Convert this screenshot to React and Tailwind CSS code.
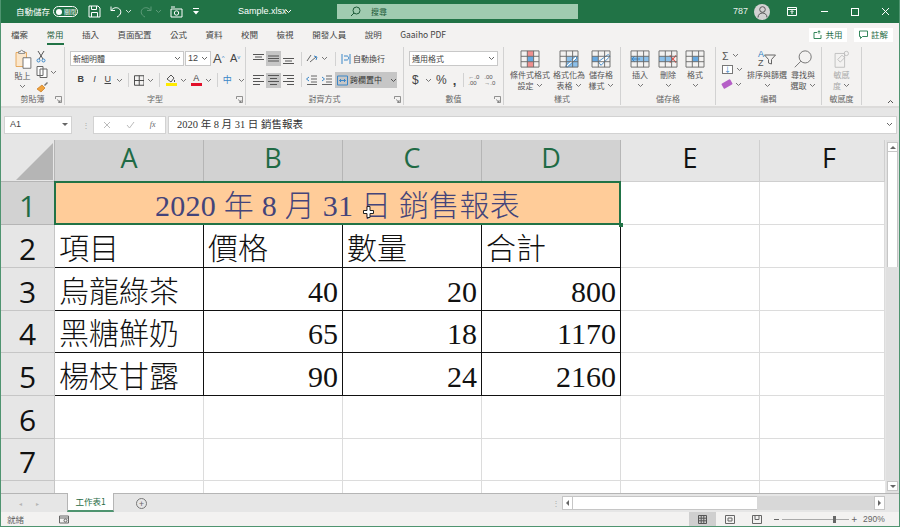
import React from "react";

const ui = "font-['Noto_Sans_CJK_TC','Liberation_Sans',sans-serif]";
const cellFont = "font-['Liberation_Serif','Noto_Sans_CJK_TC',serif]";

const Chev = ({ className = "" }) => (
  <svg width="7" height="5" viewBox="0 0 7 5" className={"shrink-0 " + className}>
    <path d="M1 1l2.500 2.500L6 1" fill="none" stroke="currentColor" strokeWidth="1" />
  </svg>
);

const Launcher = () => (
  <svg width="7" height="7" viewBox="0 0 7 7" className="absolute right-[2px] top-[3px] text-[#777]">
    <path d="M.5 3V.5H6.500V6.500H3.500M2 3.500L5 6M5 4v2H3" fill="none" stroke="currentColor" strokeWidth=".8" />
  </svg>
);

const Group = ({ label, width, launcher, children }) => (
  <div className={"flex h-full flex-col shrink-0 border-r border-[#d2d2d2] " + width}>
    <div className="flex-1 min-h-0">{children}</div>
    <div className="relative h-[12px] text-center text-[8px] leading-[12px] text-[#666]">
      {label}
      {launcher && <Launcher />}
    </div>
  </div>
);

const Lines = ({ kind, active }) => {
  const rows = {
    top: ["M1 1.500h11", "M3 4h7", "M1 6.500h11"],
    mid: ["M1 3h11", "M1 5.500h11", "M1 8h11"],
    bot: ["M1 5.500h11", "M3 8h7", "M1 10.500h11"],
    left: ["M1 1.500h11", "M1 4.500h7", "M1 7.500h11", "M1 10.500h7"],
    center: ["M1 1.500h11", "M3 4.500h7", "M1 7.500h11", "M3 10.500h7"],
    right: ["M1 1.500h11", "M5 4.500h7", "M1 7.500h11", "M5 10.500h7"],
  }[kind];
  return (
    <span className={"flex h-[15px] w-[15px] shrink-0 items-center justify-center " + (active ? "bg-[#c6c6c6]" : "")}>
      <svg width="13" height="12" viewBox="0 0 13 12">
        {rows.map((d) => (
          <path key={d} d={d} stroke="#555" strokeWidth="1" />
        ))}
      </svg>
    </span>
  );
};

const Big = ({ icon, l1, l2, width, disabled }) => (
  <div className={"flex flex-col items-center shrink-0 text-[8px] leading-[11px] " + width + (disabled ? " text-[#aaa]" : " text-[#555]")}>
    <div className="flex h-[19px] items-start justify-center">{icon}</div>
    <div className="whitespace-nowrap">{l1}</div>
    <div className="flex h-[11px] items-center gap-[2px] whitespace-nowrap">
      {l2}
      <Chev className="text-[#777]" />
    </div>
  </div>
);

const GridIcon = ({ children }) => (
  <svg width="20" height="18" viewBox="0 0 22 20">
    {children}
    <path d="M1 1h20v18H1zM1 7h20M1 13h20M8 1v18M15 1v18" fill="none" stroke="#666" strokeWidth="1" />
  </svg>
);

const RowHeader = ({ n, active }) => (
  <div className={"flex items-center justify-center border-b border-r pt-[4px] text-[30px] font-['Open_Sans',sans-serif] " + (active ? "bg-[#d2d2d2] border-[#b5b5b5] text-[#1f6b45]" : "bg-[#e6e6e6] border-[#c6c6c6] text-[#111]")}>
    {n}
  </div>
);

const ColHeader = ({ c, active, className = "" }) => (
  <div className={"flex items-center justify-center border-r border-b pb-[5px] text-[27px] font-['Open_Sans',sans-serif] " + (active ? "bg-[#d2d2d2] border-[#b5b5b5] text-[#1f6b45] " : "bg-[#e6e6e6] border-[#cfcfcf] text-[#111] ") + className}>
    {c}
  </div>
);

const Cell = ({ children, right }) => (
  <div className={"flex items-center border-b border-r border-[#111] bg-white pl-[4px] pr-[4px] pt-[4px] text-[30px] font-light text-[#111] whitespace-nowrap overflow-hidden " + cellFont + (right ? " justify-end" : "")}>
    {children}
  </div>
);

const Empty = () => <div className="border-b border-r border-[#dcdcdc] bg-white" />;

const data = [
  ["項目", "價格", "數量", "合計"],
  ["烏龍綠茶", "40", "20", "800"],
  ["黑糖鮮奶", "65", "18", "1170"],
  ["楊枝甘露", "90", "24", "2160"],
];

const tabs = ["檔案", "常用", "插入", "頁面配置", "公式", "資料", "校閱", "檢視", "開發人員", "說明", "Gaaiho PDF"];

export default function App() {
  return (
    <div className={"flex h-[527px] w-[900px] flex-col overflow-hidden border-x border-b border-[#4f9470] bg-[#e6e6e6] " + ui}>
      {/* title bar */}
      <div className="flex h-[23px] shrink-0 items-center bg-[#217346] text-[9px] text-white -mx-px [&>*]:shrink-0">
        <span className="ml-[16px] w-[34px] whitespace-nowrap text-[8.500px]">自動儲存</span>
        <span className="ml-[3px] flex h-[11px] w-[25px] items-center gap-[2px] rounded-full border border-white pl-[2px] text-[6px]">
          <span className="h-[6px] w-[6px] rounded-full bg-white" />關閉
        </span>
        <svg className="ml-[10px]" width="13" height="13" viewBox="0 0 13 13" fill="none" stroke="#fff" strokeWidth="1">
          <path d="M1 1h9l2 2v9H1zM3.500 1v3.500h5V1M3.500 12V7.500h6V12" />
        </svg>
        <svg className="ml-[9px]" width="12" height="13" viewBox="0 0 12 13" fill="none" stroke="#fff" strokeWidth="1">
          <path d="M1 1.500v4h4M1.200 5.500C3 2.500 7 1.800 9.500 4c2.200 2.200 1.800 5.800-2.500 8" />
        </svg>
        <Chev className="ml-[3px] text-[#cfe3d7]" />
        <svg className="ml-[8px]" width="12" height="13" viewBox="0 0 12 13" fill="none" stroke="#5d9a78" strokeWidth="1">
          <path d="M11 1.500v4H7M10.800 5.500C9 2.500 5 1.800 2.500 4 .3 6.200.7 9.800 5 12" />
        </svg>
        <Chev className="ml-[3px] text-[#5d9a78]" />
        <svg className="ml-[8px]" width="13" height="12" viewBox="0 0 13 12" fill="none" stroke="#fff" strokeWidth="1">
          <path d="M1 3h11v8H1zM1 1h4" />
          <circle cx="6.500" cy="7" r="2.200" />
        </svg>
        <svg className="ml-[9px]" width="8" height="7" viewBox="0 0 8 7" fill="#fff">
          <path d="M1 0h6v1H1zM1 3h6L4 6.500z" />
        </svg>
        <span className="ml-[38px] w-[44px] text-[9px] font-['Liberation_Sans',sans-serif] whitespace-nowrap">Sample.xlsx</span>
        <Chev className="ml-[3px] text-white" />
        <div className="ml-[45px] flex h-[15px] w-[241px] items-center bg-[#a0cbb0] pl-[13px] text-[8px] text-[#1c5a38]">
          <svg width="11" height="11" viewBox="0 0 11 11" fill="none" stroke="#1c5a38" strokeWidth="1">
            <circle cx="6.500" cy="4.500" r="3.500" />
            <path d="M4 7L1 10" />
          </svg>
          <span className="ml-[10px]">搜尋</span>
        </div>
        <span className="ml-[155px] w-[13px] text-[9px] font-['Liberation_Sans',sans-serif] text-[#e6efe9]">787</span>
        <span className="ml-[8px] flex h-[16px] w-[16px] items-center justify-center rounded-full bg-[#d2d2d2]">
          <svg width="11" height="12" viewBox="0 0 11 12" fill="none" stroke="#555" strokeWidth="1">
            <circle cx="5.500" cy="3.500" r="2.800" />
            <path d="M1 11.500c0-6 9-6 9 0" />
          </svg>
        </span>
        <svg className="ml-[17px]" width="10" height="9" viewBox="0 0 10 9" fill="none" stroke="#fff" strokeWidth="1">
          <path d="M.5.500h9v8h-9zM.5 2.500h9M5 7V4M3.500 5L5 3.500 6.500 5" />
        </svg>
        <span className="ml-[24px] h-px w-[7px] bg-white" />
        <span className="ml-[23px] h-[8px] w-[8px] border border-white" />
        <svg className="ml-[22px]" width="9" height="9" viewBox="0 0 9 9" stroke="#fff" strokeWidth="1">
          <path d="M1 1l7 7M8 1L1 8" />
        </svg>
      </div>

      {/* tabs */}
      <div className="flex h-[23px] shrink-0 items-center bg-[#f3f2f1] pl-[10px] text-[8.500px] text-[#444]">
        <div className="flex flex-1 gap-[18.500px]">
          {tabs.map((t) => (
            <span key={t} className={"relative whitespace-nowrap " + (t === "常用" ? "text-[#1f5f3d]" : "")}>
              {t}
              {t === "常用" && <span className="absolute inset-x-0 -bottom-[4px] h-[2px] bg-[#217346]" />}
            </span>
          ))}
        </div>
        <div className="mr-[6px] flex gap-[7px] text-[#1f6b45]">
          <span className="flex h-[14px] w-[38px] items-center justify-center gap-[3px] bg-white">
            <svg width="9" height="9" viewBox="0 0 9 9" fill="none" stroke="#1f7a4b" strokeWidth=".9">
              <path d="M6 .8v3M4.500 2.300L6 .8l1.500 1.500M4 2.500H1V8.500h7V5" />
            </svg>
            共用
          </span>
          <span className="flex h-[14px] w-[39px] items-center justify-center gap-[3px] bg-white">
            <svg width="9" height="9" viewBox="0 0 9 9" fill="none" stroke="#1f7a4b" strokeWidth=".9">
              <path d="M.5 1h8v5.500H3.500L1.500 8.500v-2h-1z" />
            </svg>
            註解
          </span>
        </div>
      </div>

      {/* ribbon */}
      <div className="flex h-[62px] shrink-0 border-b-[2px] border-[#dcdbda] bg-[#f3f2f1] py-[1px]">
        <Group label="剪貼簿" width="w-[64px]" launcher>
          <div className="flex pl-[11px] pt-[2px] text-[#555]">
            <div className="flex w-[21px] flex-col items-center text-[8px] leading-[11px]">
              <svg width="18" height="21" viewBox="0 0 20 24" fill="none">
                <path d="M2 4h12v16H2z" fill="#fbe7cc" stroke="#e3a04f" />
                <path d="M5 5V3h2a1.500 1.500 0 013 0h2v2z" fill="#fff" stroke="#777" />
                <path d="M10 10h9v12h-9z" fill="#fff" stroke="#666" />
              </svg>
              <span>貼上</span>
              <Chev className="text-[#777] mt-[3px]" />
            </div>
            <div className="ml-[3px] flex flex-col gap-[3px] pt-[1px]">
              <svg width="10" height="13" viewBox="0 0 10 13" fill="none" stroke="#555">
                <path d="M2 1l5 8M8 1L3 9" />
                <circle cx="2.500" cy="10.500" r="1.500" stroke="#3b87c8" />
                <circle cx="7.500" cy="10.500" r="1.500" stroke="#3b87c8" />
              </svg>
              <span className="flex items-center gap-[2px]">
                <svg width="12" height="12" viewBox="0 0 12 12" fill="#fff" stroke="#666">
                  <path d="M1 .5h6v9H1zM4 3h7v8.500H4z" />
                </svg>
                <Chev className="text-[#777]" />
              </span>
              <svg width="13" height="12" viewBox="0 0 13 12">
                <path d="M1 8l5-4 3 3-4 4z" fill="#f0a23c" stroke="#c87a1e" strokeWidth=".7" />
                <path d="M8 4l3-3 1 1-3 3z" fill="#777" />
              </svg>
            </div>
          </div>
        </Group>

        <Group label="字型" width="w-[181px]" launcher>
          <div className="flex items-center pl-[5px] pt-[4px] text-[#444]">
            <div className="flex h-[15px] w-[114px] items-center justify-between border border-[#c8c8c8] bg-white px-[2px] text-[8px]">
              新細明體 <Chev className="text-[#666]" />
            </div>
            <div className="ml-[1px] flex h-[15px] w-[26px] items-center justify-between border border-[#c8c8c8] bg-white px-[2px] text-[9px] font-['Liberation_Sans',sans-serif]">
              12 <Chev className="text-[#666]" />
            </div>
            <span className="ml-[2px] w-[16px] text-[13px] leading-none font-['Liberation_Sans',sans-serif]">
              A<sup className="text-[6px] text-[#3b87c8]">^</sup>
            </span>
            <span className="ml-[1px] w-[13px] text-[11px] leading-none font-['Liberation_Sans',sans-serif]">
              A<sup className="text-[6px] text-[#3b87c8]">v</sup>
            </span>
          </div>
          <div className="mt-[6px] flex h-[16px] items-center pl-[9px] text-[9px] text-[#444] font-['Liberation_Sans',sans-serif]">
            <b className="w-[14px] text-center">B</b>
            <i className="w-[15px] text-center">I</i>
            <u className="w-[13px] text-center">U</u>
            <Chev className="ml-[2px] text-[#777]" />
            <span className="ml-[5px] mr-[5px] h-[14px] w-px bg-[#d2d2d2]" />
            <svg width="11" height="11" viewBox="0 0 11 11" fill="none" stroke="#444">
              <path d="M.5.500h10v10H.5zM5.500.500v10M.5 5.500h10" />
            </svg>
            <Chev className="ml-[3px] text-[#777]" />
            <span className="ml-[5px] mr-[5px] h-[14px] w-px bg-[#d2d2d2]" />
            <span className="flex w-[12px] flex-col items-center">
              <svg width="10" height="9" viewBox="0 0 10 9" fill="none" stroke="#555">
                <path d="M1 5l4-4 3 3-3 4zM8.500 6v2" />
              </svg>
              <span className="h-[2.500px] w-[11px] bg-[#ffeb00]" />
            </span>
            <Chev className="ml-[3px] text-[#777]" />
            <span className="ml-[4px] flex w-[11px] flex-col items-center text-[9px] leading-[9px]">
              A
              <span className="h-[2.500px] w-[11px] bg-[#e2102a]" />
            </span>
            <Chev className="ml-[3px] text-[#777]" />
            <span className="ml-[5px] mr-[5px] h-[14px] w-px bg-[#d2d2d2]" />
            <span className={"w-[14px] text-[9px] text-[#3b87c8] " + ui}>中</span>
            <Chev className="ml-[2px] text-[#777]" />
          </div>
        </Group>

        <Group label="對齊方式" width="w-[158px]" launcher>
          <div className="flex items-center pl-[5px] pt-[4px] text-[8px] text-[#444]">
            <Lines kind="top" />
            <Lines kind="mid" active />
            <Lines kind="bot" />
            <span className="ml-[5px] mr-[4px] h-[14px] w-px bg-[#d2d2d2]" />
            <svg width="12" height="11" viewBox="0 0 12 11" fill="none" stroke="#666">
              <path d="M1 8l4-6M4 9l6-5" />
              <path d="M8 3l3 1-1 3" stroke="#3b87c8" />
            </svg>
            <Chev className="ml-[3px] text-[#777]" />
            <span className="ml-[7px] mr-[5px] h-[14px] w-px bg-[#d2d2d2]" />
            <svg width="10" height="12" viewBox="0 0 10 12" fill="none" stroke="#3b87c8">
              <path d="M1 1v10M9 1v10M3 3h3c2 0 2 4 0 4H3" />
            </svg>
            <span className="ml-[2px] whitespace-nowrap">自動換行</span>
          </div>
          <div className="mt-[6px] flex h-[16px] items-center pl-[5px] text-[8px] text-[#333]">
            <Lines kind="left" />
            <Lines kind="center" active />
            <Lines kind="right" />
            <span className="ml-[5px] mr-[4px] h-[14px] w-px bg-[#d2d2d2]" />
            <svg width="11" height="10" viewBox="0 0 11 10" fill="none" stroke="#666">
              <path d="M5 1h6M5 4h6M5 7h6M1 9.500h10" />
              <path d="M3 2L.5 4 3 6" stroke="#3b87c8" />
            </svg>
            <svg className="ml-[4px]" width="11" height="10" viewBox="0 0 11 10" fill="none" stroke="#666">
              <path d="M5 1h6M5 4h6M5 7h6M1 9.500h10" />
              <path d="M1 2l2.500 2L1 6" stroke="#3b87c8" />
            </svg>
            <span className="ml-[3px] flex h-[16px] w-[62px] items-center gap-[2px] bg-[#c6c6c6] pl-[2px]">
              <svg width="11" height="11" viewBox="0 0 11 11" fill="none" stroke="#3b87c8">
                <path d="M.5 1h10v9H.5zM2.500 5.500h6M4 4L2.500 5.500 4 7M7 4l1.500 1.500L7 7" />
              </svg>
              <span className="whitespace-nowrap">跨欄置中</span>
              <Chev className="ml-[6px] text-[#555]" />
            </span>
          </div>
        </Group>

        <Group label="數值" width="w-[100px]" launcher>
          <div className="pl-[5px] pt-[4px]">
            <div className="flex h-[15px] w-[89px] items-center justify-between border border-[#c8c8c8] bg-white px-[2px] text-[8px] text-[#444]">
              通用格式 <Chev className="text-[#666]" />
            </div>
          </div>
          <div className="mt-[6px] flex h-[16px] items-center pl-[8px] text-[#444] font-['Liberation_Sans',sans-serif]">
            <span className="w-[12px] text-[12px]">$</span>
            <Chev className="ml-[1px] text-[#777]" />
            <span className="ml-[4px] text-[12px]">%</span>
            <span className="ml-[6px] text-[13px] font-bold leading-none">,</span>
            <span className="ml-[7px] mr-[4px] h-[14px] w-px bg-[#d2d2d2]" />
            <span className="text-[6px] leading-[6px] w-[14px] text-[#555]">←.0<br />.00</span>
            <span className="ml-[2px] text-[6px] leading-[6px] w-[14px] text-[#555]">.00<br />→.0</span>
          </div>
        </Group>

        <Group label="樣式" width="w-[117px]">
          <div className="flex pl-[6px] pt-[3px]">
            <Big width="w-[40px]" l1="條件式格式" l2="設定" icon={
              <GridIcon>
                <path d="M8 1h7v6H8z" fill="#ef8f8f" />
                <path d="M8 7h7v6H8z" fill="#66a8e0" />
                <path d="M8 13h7v6H8z" fill="#ef8f8f" />
              </GridIcon>
            } />
            <Big width="w-[38px]" l1="格式化為" l2="表格" icon={
              <GridIcon>
                <path d="M8 7h13v12H8z" fill="#8cc0ea" />
                <path d="M7 18l11-11 2 2-11 10z" fill="#fff" stroke="#3b87c8" />
              </GridIcon>
            } />
            <Big width="w-[26px]" l1="儲存格" l2="樣式" icon={
              <GridIcon>
                <path d="M1 7h7v6H1z" fill="#66a8e0" />
                <path d="M8 13l11-8 2 2-10 10z" fill="#fff" stroke="#3b87c8" />
              </GridIcon>
            } />
          </div>
        </Group>

        <Group label="儲存格" width="w-[95px]">
          <div className="flex pl-[5px] pt-[3px]">
            <Big width="w-[28px]" l1="插入" l2="" icon={
              <GridIcon>
                <path d="M1 7h20v6H1z" fill="#8cc0ea" />
                <path d="M11 10H2M5 7L2 10l3 3" fill="none" stroke="#2f7fc4" />
              </GridIcon>
            } />
            <Big width="w-[28px]" l1="刪除" l2="" icon={
              <GridIcon>
                <path d="M1 7h14v6H1z" fill="#8cc0ea" />
                <path d="M13 6l7 8M20 6l-7 8" stroke="#e2564f" strokeWidth="1.200" />
              </GridIcon>
            } />
            <Big width="w-[26px]" l1="格式" l2="" icon={
              <GridIcon>
                <path d="M8 7h7v6H8z" fill="#66a8e0" />
              </GridIcon>
            } />
          </div>
        </Group>

        <Group label="編輯" width="w-[106px]">
          <div className="flex pl-[6px] pt-[3px] text-[#555]">
            <div className="flex w-[22px] flex-col gap-[5px] pt-[1px]">
              <span className="flex h-[9px] items-center gap-[3px] text-[11px] leading-none">
                Σ <Chev className="text-[#777]" />
              </span>
              <span className="flex h-[9px] items-center gap-[3px]">
                <span className="flex h-[9px] w-[11px] items-center justify-center border border-[#777] bg-white text-[7px] leading-none text-[#2f7fc4]">↓</span>
                <Chev className="text-[#777]" />
              </span>
              <span className="flex h-[10px] items-center gap-[3px]">
                <span className="h-[6px] w-[10px] -rotate-[30deg] rounded-[1px] bg-[#b55fc7]" />
                <Chev className="text-[#777]" />
              </span>
            </div>
            <Big width="w-[46px]" l1="排序與篩選" l2="" icon={
              <span className="flex items-center">
                <span className="flex flex-col text-[9px] leading-[9px] font-['Liberation_Sans',sans-serif]">
                  <span className="text-[#2f7fc4]">A</span>
                  <span className="text-[#555]">Z</span>
                </span>
                <svg width="12" height="11" viewBox="0 0 12 11" fill="none" stroke="#666">
                  <path d="M.5 1h11L7.500 5.500V10l-3-1V5.500z" />
                </svg>
              </span>
            } />
            <Big width="w-[26px]" l1="尋找與" l2="選取" icon={
              <svg width="20" height="19" viewBox="0 0 22 22" fill="none" stroke="#666">
                <circle cx="13.500" cy="8" r="7" />
                <path d="M8.500 13L1.500 20" />
              </svg>
            } />
          </div>
        </Group>

        <Group label="敏感度" width="w-[40px]">
          <div className="flex justify-center pt-[3px]">
            <Big disabled width="w-[30px]" l1="敏感" l2="度" icon={
              <svg width="18" height="19" viewBox="0 0 20 22" fill="none" stroke="#bbb">
                <path d="M2 4h11v16H2zM5 11l5-5 3 3-5 5z" />
                <circle cx="15" cy="4" r="2.500" />
              </svg>
            } />
          </div>
        </Group>

        <div className="flex flex-1 items-end justify-end pb-[1px] pr-[5px]">
          <Chev className="rotate-180 text-[#555]" />
        </div>
      </div>

      {/* formula bar */}
      <div className="flex h-[32px] shrink-0 items-center bg-[#e6e6e6] pl-[3px] pr-[2px] pt-[1px] text-[9px] text-[#444]">
        <div className="flex h-[18px] w-[68px] items-center justify-between border border-[#d2d2d2] bg-white pl-[5px] pr-[3px] font-['Liberation_Sans',sans-serif]">
          A1 <span className="border-x-[3px] border-t-[3px] border-x-transparent border-t-[#666]" />
        </div>
        <span className="ml-[8px] w-[12px] text-center text-[8px] text-[#aaa]">⋮</span>
        <div className="ml-[1px] flex h-[18px] w-[73px] items-center justify-around border border-[#d2d2d2] bg-white px-[2px]">
          <svg width="8" height="8" viewBox="0 0 8 8" stroke="#bbb"><path d="M1 1l6 6M7 1L1 7" /></svg>
          <svg width="9" height="8" viewBox="0 0 9 8" fill="none" stroke="#bbb"><path d="M1 4l2.500 3L8 1" /></svg>
          <i className={"text-[8px] text-[#666] " + cellFont}>fx</i>
        </div>
        <div className="ml-[2px] flex h-[18px] flex-1 items-center justify-between border border-[#d2d2d2] bg-white pl-[8px] pr-[3px] text-[#333]">
          <span className={"text-[10.500px] " + cellFont}>2020 年 8 月 31 日 銷售報表</span>
          <Chev className="text-[#666]" />
        </div>
      </div>

      {/* grid + scrollbar */}
      <div className="flex min-h-0 flex-1">
        <div className="relative min-w-0 flex-1 overflow-hidden">
          <div className="grid h-full grid-cols-[54px_149px_139px_139px_139px_139px_125px] grid-rows-[42px_43px_43px_43px_42px_43px_43px_42px_1fr]">
            <div className="flex items-end justify-end border-r border-b border-[#b5b5b5] bg-[#e6e6e6] pb-[1px] pr-[1px]">
              <span className="border-b-[37px] border-l-[37px] border-b-[#b5b5b5] border-l-transparent" />
            </div>
            <ColHeader c="A" active />
            <ColHeader c="B" active />
            <ColHeader c="C" active />
            <ColHeader c="D" active />
            <ColHeader c="E" />
            <ColHeader c="F" className="pl-[14px]" />

            <RowHeader n="1" active />
            <div className={"col-span-4 flex items-center justify-center border-b border-r border-[#111] bg-[#ffcc99] pt-[5px] text-[30px] font-light tracking-[0.25px] text-[#44447a] " + cellFont}>
              2020 年 8 月 31 日 銷售報表
            </div>
            <Empty />
            <Empty />

            {data.map((row, i) => (
              <React.Fragment key={row[0]}>
                <RowHeader n={i + 2} />
                {row.map((v, j) => (
                  <Cell key={j} right={i > 0 && j > 0}>{v}</Cell>
                ))}
                <Empty />
                <Empty />
              </React.Fragment>
            ))}

            {[6, 7].map((n) => (
              <React.Fragment key={n}>
                <RowHeader n={n} />
                <Empty /><Empty /><Empty /><Empty /><Empty /><Empty />
              </React.Fragment>
            ))}
            <div className="border-r border-[#c6c6c6] bg-[#e6e6e6]" />
            <div className="border-r border-[#dcdcdc] bg-white" />
            <div className="border-r border-[#dcdcdc] bg-white" />
            <div className="border-r border-[#dcdcdc] bg-white" />
            <div className="border-r border-[#dcdcdc] bg-white" />
            <div className="border-r border-[#dcdcdc] bg-white" />
            <div className="bg-white" />
          </div>
          {/* selection */}
          <div className="pointer-events-none absolute left-[53px] top-[41px] h-[44px] w-[567px] border-2 border-[#217346]" />
          <span className="pointer-events-none absolute left-[618px] top-[83px] h-[4px] w-[4px] bg-[#217346]" />
          <svg className="pointer-events-none absolute left-[362px] top-[66px]" width="11" height="12" viewBox="0 0 11 12">
            <path d="M4 .5h3v4h3.500v3H7v4H4v-4H.5v-3H4z" fill="#fff" stroke="#222" />
          </svg>
        </div>
        <div className="flex w-[13px] shrink-0 flex-col bg-[#e0e0e0] pb-[2px] pl-px pr-px pt-[2px]">
          <span className="flex h-[10px] items-center justify-center border border-[#c6c6c6] bg-white">
            <span className="border-x-[3px] border-b-[3px] border-x-transparent border-b-[#666]" />
          </span>
          <span className="h-[115px] border-x border-[#c6c6c6] bg-white" />
          <span className="flex-1" />
          <span className="flex h-[10px] items-center justify-center border border-[#c6c6c6] bg-white">
            <span className="border-x-[3px] border-t-[3px] border-x-transparent border-t-[#666]" />
          </span>
        </div>
      </div>

      {/* sheet tabs */}
      <div className="flex h-[19px] shrink-0 items-stretch border-t border-[#b5b5b5] bg-[#e6e6e6] text-[8.500px]">
        <div className="flex w-[66px] items-center gap-[14px] pl-[18px] text-[6px] text-[#b5b5b5]">
          <span>◂</span><span>▸</span>
        </div>
        <div className="-mt-px flex w-[47px] items-center justify-center border-x border-b-2 border-x-[#b5b5b5] border-b-[#4f9470] bg-white text-[#1f6b45]">
          工作表1
        </div>
        <div className="ml-[22px] flex w-[11px] items-center">
          <span className="flex h-[11px] w-[11px] items-center justify-center rounded-full border border-[#777] text-[9px] leading-none text-[#666]">+</span>
        </div>
        <div className="ml-[405px] flex w-[4px] items-center">
          <span className="text-[8px] text-[#aaa]">⋮</span>
        </div>
        <div className="ml-[6px] my-[2px] flex w-[323px] items-stretch bg-[#d8d8d8]">
          <span className="flex w-[11px] items-center justify-center border border-[#c6c6c6] bg-white">
            <span className="border-y-[3px] border-r-[3px] border-y-transparent border-r-[#666]" />
          </span>
          <span className="w-[184px] border-y border-[#c6c6c6] bg-white" />
          <span className="flex-1" />
          <span className="flex w-[11px] items-center justify-center border border-[#c6c6c6] bg-white">
            <span className="border-y-[3px] border-l-[3px] border-y-transparent border-l-[#666]" />
          </span>
        </div>
      </div>

      {/* status bar */}
      <div className="flex h-[14px] shrink-0 items-center bg-[#f3f2f1] text-[8.500px] text-[#666]">
        <span className="ml-[6px] w-[52px]">就緒</span>
        <svg width="10" height="9" viewBox="0 0 10 9" fill="none" stroke="#666">
          <path d="M.5 1h9v7h-9zM.5 3h9" />
          <circle cx="6.500" cy="5.500" r="1.500" />
        </svg>
        <div className="ml-auto flex items-center pr-[13px]">
          <span className="flex h-[14px] w-[27px] items-center justify-center bg-[#cfcfcf]">
            <svg width="9" height="9" viewBox="0 0 9 9" fill="none" stroke="#555">
              <path d="M.5.500h8v8h-8zM3.200.500v8M5.800.500v8M.5 3.200h8M.5 5.800h8" />
            </svg>
          </span>
          <svg className="ml-[9px]" width="10" height="9" viewBox="0 0 10 9" fill="none" stroke="#666">
            <path d="M.5.500h9v8h-9zM3 3h4v3H3z" />
          </svg>
          <svg className="ml-[17px]" width="10" height="9" viewBox="0 0 10 9" fill="none" stroke="#666">
            <path d="M.5.500h9v8h-9zM3 .5v4h4v-4" />
          </svg>
          <span className="ml-[12px] h-px w-[5px] bg-[#666]" />
          <span className="relative ml-[3px] h-px w-[67px] bg-[#aaa]">
            <span className="absolute left-[51px] -top-[3px] h-[7px] w-[3px] bg-[#666]" />
          </span>
          <span className="ml-[2px] text-[10px] leading-none">+</span>
          <span className="ml-[6px] w-[23px] text-[8.500px] font-['Liberation_Sans',sans-serif]">290%</span>
        </div>
      </div>
    </div>
  );
}
